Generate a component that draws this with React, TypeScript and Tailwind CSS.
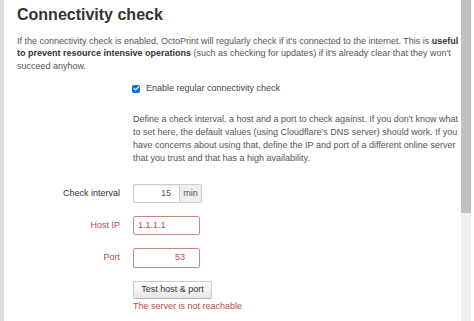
import { Check } from "lucide-react";

const font = { fontFamily: '"Liberation Sans", Arial, sans-serif' };

function Label({ children, error }: { children: React.ReactNode; error?: boolean }) {
  return (
    <div className={`flex items-center justify-end text-[9px] ${error ? "text-[#b94a48]" : "text-[#333]"}`}>
      {children}
    </div>
  );
}

export default function App() {
  return (
    <div className="w-[474px] h-[321px] flex overflow-hidden bg-white" style={font}>
      {/* left edge */}
      <div className="w-[4px] shrink-0 bg-[#dedede]" />

      {/* content */}
      <div className="flex-1 pl-[13px] pr-[1px]">
        <h3 className="pt-[5px] text-[16px] leading-[20px] font-bold text-[#333]">Connectivity check</h3>

        <div className="mt-[9.6px] text-[9px] leading-[12.8px] text-[#555] whitespace-nowrap">
          <div>
            If the connectivity check is enabled, OctoPrint will regularly check if it's connected to the internet. This is{" "}
            <b className="text-[#333]">useful</b>
          </div>
          <div>
            <b className="text-[#333]">to prevent resource intensive operations</b> (such as checking for updates) if it's already clear that they won't
          </div>
          <div>succeed anyhow.</div>
        </div>

        <div className="ml-[115px] mt-[9.5px] h-[13px] flex items-center gap-[6px] text-[9px] text-[#444]">
          <span className="w-[8px] h-[8px] rounded-[2px] bg-[#0b6ff0] flex items-center justify-center">
            <Check size={7} strokeWidth={4} className="text-white" />
          </span>
          <span>Enable regular connectivity check</span>
        </div>

        <div className="ml-[116px] mt-[18px] text-[9px] leading-[12.8px] text-[#555] whitespace-nowrap">
          <div>Define a check interval, a host and a port to check against. If you don't know what</div>
          <div>to set here, the default values (using Cloudflare's DNS server) should work. If you</div>
          <div>have concerns about using that, define the IP and port of a different online server</div>
          <div>that you trust and that has a high availability.</div>
        </div>

        <div className="mt-[19.5px] grid grid-cols-[103px_1fr] gap-x-[13px] gap-y-[13px]">
          <Label>Check interval</Label>
          <div className="flex h-[19px]">
            <div className="w-[47px] border border-[#ccc] rounded-l-[2px] flex items-center justify-end pr-[8px] text-[9px] text-[#555] shadow-[inset_0_1px_1px_rgba(0,0,0,0.075)]">
              15
            </div>
            <div className="w-[22px] border border-l-0 border-[#ccc] rounded-r-[2px] bg-[#eee] flex items-center justify-center text-[9px] text-[#555]">
              min
            </div>
          </div>

          <Label error>Host IP</Label>
          <div className="w-[67px] h-[19px] border border-[#c98584] rounded-[2px] flex items-center pl-[4px] text-[9px] text-[#b94a48]">
            1.1.1.1
          </div>

          <Label error>Port</Label>
          <div className="w-[67px] h-[20px] border border-[#c98584] rounded-[2px] flex items-center justify-end pr-[14px] text-[9px] text-[#b94a48]">
            53
          </div>

          <div />
          <div>
            <div className="w-[79px] h-[18px] border border-[#ccc] border-b-[#b3b3b3] rounded-[2px] bg-gradient-to-b from-white to-[#e6e6e6] flex items-center justify-center text-[9px] text-[#333]">
              Test host &amp; port
            </div>
            <div className="mt-[1px] text-[9px] leading-[12.8px] text-[#b94a48]">The server is not reachable</div>
          </div>
        </div>
      </div>

      {/* scrollbar */}
      <div className="w-[10px] shrink-0 flex flex-col">
        <div className="h-[213px] bg-[#c1c1c1]" />
        <div className="flex-1 bg-[#f1f1f1]" />
      </div>
      <div className="w-[3px] shrink-0 bg-white" />
    </div>
  );
}
